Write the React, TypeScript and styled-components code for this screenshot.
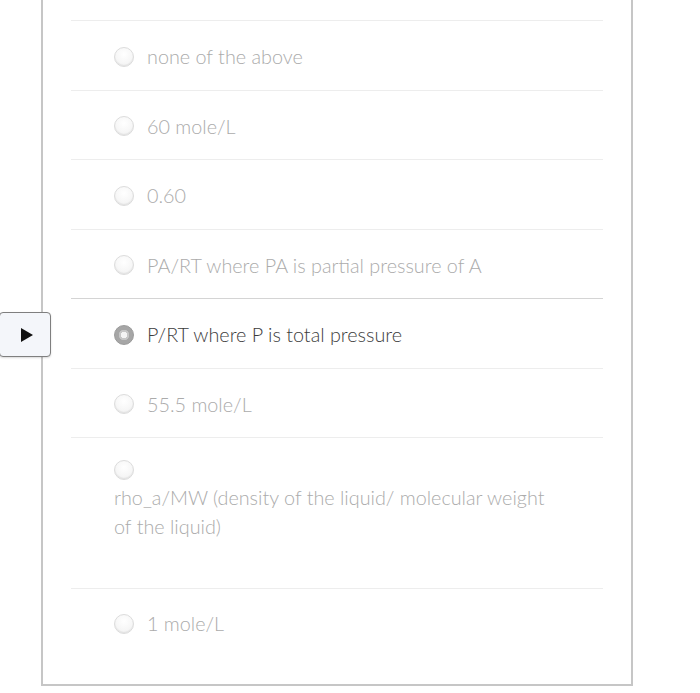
import * as React from 'react';
import styled, { createGlobalStyle, css } from 'styled-components';

const GlobalStyle = createGlobalStyle`
  html, body {
    margin: 0;
    padding: 0;
    background: #ffffff;
  }
  body {
    font-family: 'Lato', 'Liberation Sans', sans-serif;
  }
`;

interface Answer {
  id: string;
  text: string;
}

const answers: Answer[] = [
  { id: 'a1', text: 'none of the above' },
  { id: 'a2', text: '60 mole/L' },
  { id: 'a3', text: '0.60' },
  { id: 'a4', text: 'PA/RT where PA is partial pressure of A' },
  { id: 'a5', text: 'P/RT where P is total pressure' },
  { id: 'a6', text: '55.5 mole/L' },
  { id: 'a7', text: 'rho_a/MW (density of the liquid/ molecular weight of the liquid)' },
  { id: 'a8', text: '1 mole/L' }
];

const SELECTED = 'a5';
const STACKED = 'a7';

export default function App(): JSX.Element {
  return (
    <>
      <GlobalStyle />
      <Page>
        <PlayButton aria-label="play">
          <svg width="14" height="16" viewBox="0 0 14 16">
            <path d="M1 1 L13 8 L1 15 Z" fill="#111" />
          </svg>
        </PlayButton>
        <Panel>
          <AnswerList>
            {answers.map((a, i) => (
              <AnswerRow
                key={a.id}
                $last={i === answers.length - 1}
                $stacked={a.id === STACKED}
                $strongTop={a.id === SELECTED}
              >
                <Radio $checked={a.id === SELECTED} />
                <AnswerText $checked={a.id === SELECTED} $stacked={a.id === STACKED}>
                  {a.text}
                </AnswerText>
              </AnswerRow>
            ))}
          </AnswerList>
        </Panel>
      </Page>
    </>
  );
}

const Page = styled.div`
  position: relative;
  width: 700px;
  height: 693px;
  overflow: hidden;
`;

const Panel = styled.div`
  box-sizing: border-box;
  margin-left: 41px;
  margin-top: -20px;
  width: 592px;
  height: 706px;
  border: 2px solid #c6c6c6;
  border-top: none;
  padding: 40px 28px 0;
`;

const AnswerList = styled.ul`
  list-style: none;
  margin: 0;
  padding: 0;
`;

const AnswerRow = styled.li<{ $last: boolean; $stacked: boolean; $strongTop: boolean }>`
  display: flex;
  align-items: center;
  border-top: 1px solid #ededed;
  padding: 21px 0 18.5px 43px;
  min-height: 29px;

  ${p =>
    p.$strongTop &&
    css`
      border-top-color: #d4d4d4;
    `}

  ${p =>
    p.$stacked &&
    css`
      flex-wrap: wrap;
      align-items: flex-start;
      padding: 22px 50px 47px 43px;
    `}

  ${p =>
    p.$last &&
    css`
      padding-top: 20px;
    `}
`;

const Radio = styled.span<{ $checked: boolean }>`
  flex: none;
  width: 18px;
  height: 18px;
  border-radius: 50%;
  border: 1px solid #dcdcdc;
  background: radial-gradient(circle at 50% 35%, #ffffff 0%, #f6f6f6 60%, #e9e9e9 100%);
  box-shadow: inset 0 -1px 1px rgba(0, 0, 0, 0.06);

  ${p =>
    p.$checked &&
    css`
      border-color: #9a9a9a;
      background: radial-gradient(circle, #f4f4f4 0 3px, #c6c6c6 3.5px 5px, #a6a6a6 5.5px);
      box-shadow: none;
    `}
`;

const AnswerText = styled.span<{ $checked: boolean; $stacked: boolean }>`
  margin-left: 13px;
  font-size: 19.8px;
  font-weight: 300;
  line-height: 29px;
  color: ${p => (p.$checked ? '#3c3c3c' : '#ababab')};

  ${p =>
    p.$stacked &&
    css`
      flex-basis: 100%;
      margin-left: 0;
      margin-top: 3px;
    `}
`;

const PlayButton = styled.button`
  position: absolute;
  left: -1px;
  top: 312px;
  width: 52px;
  height: 45px;
  border: 1.5px solid #7f7f7f;
  border-radius: 4px;
  background: #f4f6fa;
  display: flex;
  align-items: center;
  justify-content: center;
  padding: 0 0 0 4px;
  box-shadow: 0 1px 2px rgba(0, 0, 0, 0.15);
  cursor: pointer;
  z-index: 2;
`;
